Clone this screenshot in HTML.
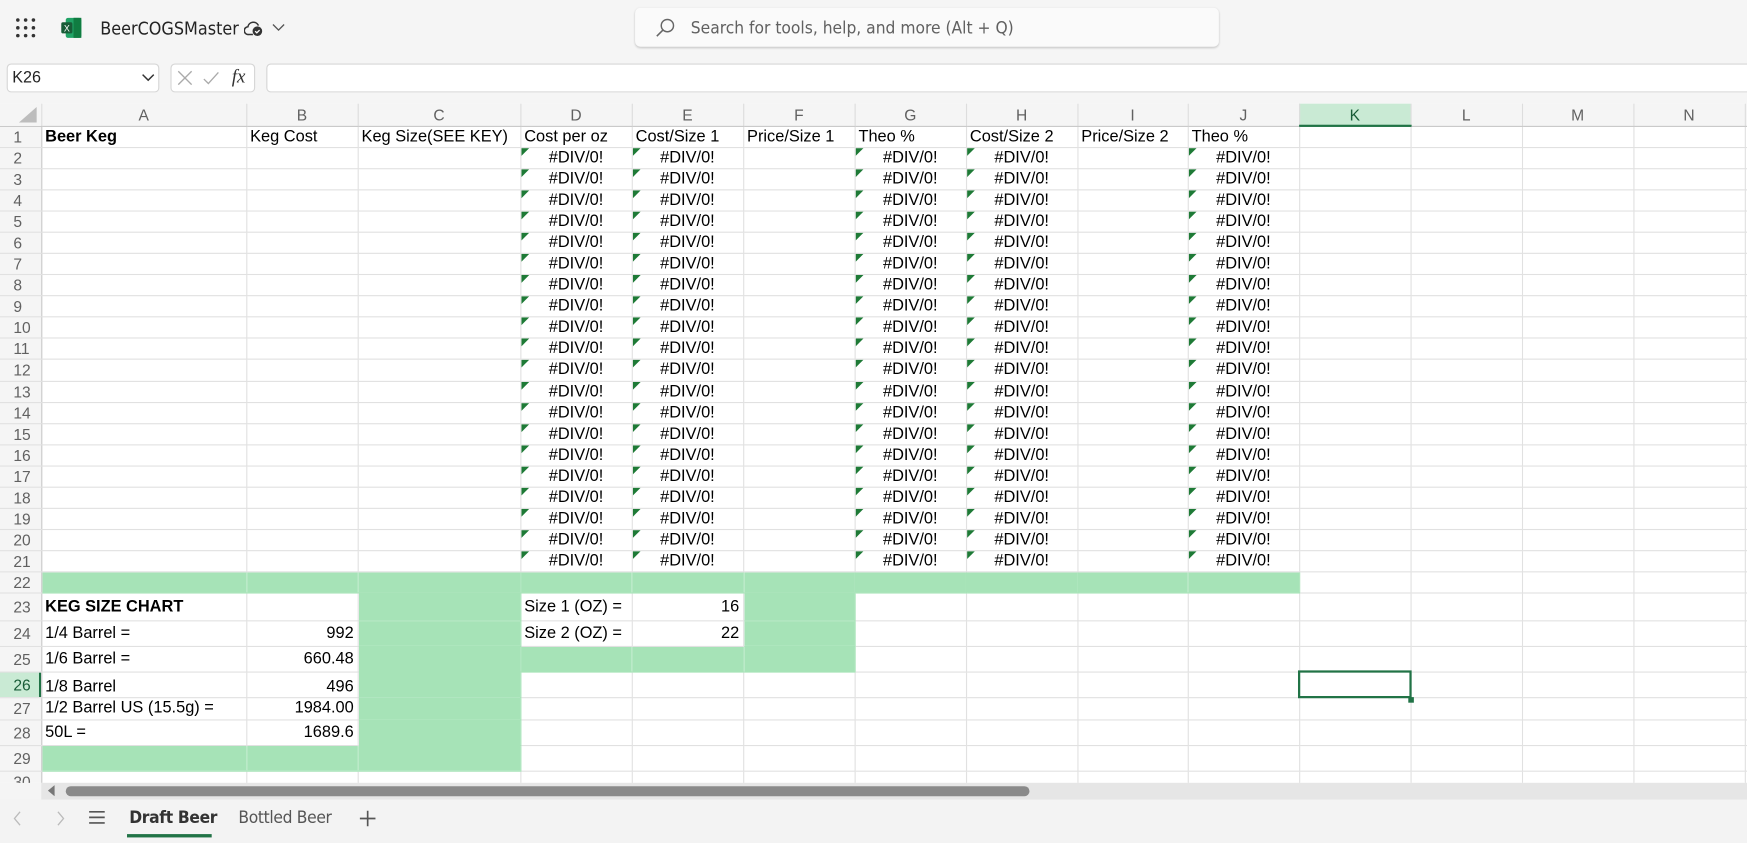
<!DOCTYPE html><html><head><meta charset="utf-8"><style>
html,body{margin:0;padding:0;width:1747px;height:843px;overflow:hidden;background:#f3f3f3;font-family:"Liberation Sans",Arial,sans-serif}
#w{position:absolute;left:0;top:0;width:1568px;height:757px;transform:scale(1.11416,1.11361);transform-origin:0 0;background:#f5f5f5;overflow:hidden}
.a{position:absolute}
#grid{position:absolute;left:0;top:93px;width:1568px;height:610px;overflow:hidden;background:#fff}
table{border-collapse:collapse;table-layout:fixed;width:1570px;font-size:14.7px;color:#000}
td{border:1px solid #e1e1e1;padding:0 3px;height:18px;white-space:nowrap;overflow:hidden;line-height:18px;position:relative}
tbody tr{height:19.05px}
th{font-weight:normal;color:#616161;font-size:14px;background:#f5f5f5;border-right:1px solid #c8c8c8;border-bottom:1px solid #e1e1e1;text-align:left;padding-left:12px}
thead th{text-align:center;padding:0;height:19px;border-right:1px solid #ddd;border-bottom:1px solid #c8c8c8}
td.e{text-align:center}
td.e:before{content:"";position:absolute;left:0;top:0;border-style:solid;border-width:7px 7px 0 0;border-color:#1e7a36 transparent transparent transparent;width:0;height:0}
td.g{background:#a6e3b7;border-color:#a6e3b7}
td.r{text-align:right}
b{font-weight:bold}
</style></head><body><div id="w">
<svg class="a" style="left:14px;top:16px" width="18" height="18"><g fill="#333"><circle cx="2" cy="2" r="1.6"/><circle cx="9" cy="2" r="1.6"/><circle cx="16" cy="2" r="1.6"/><circle cx="2" cy="9" r="1.6"/><circle cx="9" cy="9" r="1.6"/><circle cx="16" cy="9" r="1.6"/><circle cx="2" cy="16" r="1.6"/><circle cx="16" cy="16" r="1.6"/><circle cx="9" cy="16" r="1.6"/></g></svg>
<svg class="a" style="left:54px;top:15px" width="20" height="20"><rect x="5" y="1" width="14" height="18" rx="2" fill="#21a366"/><rect x="12" y="1" width="7" height="18" fill="#107c41"/><rect x="1" y="5" width="10" height="10" rx="1.5" fill="#185c37"/><text x="6" y="13.5" fill="#fff" font-size="8" text-anchor="middle" font-family="Liberation Sans">X</text></svg>
<div class="a" style="left:90px;top:16px;font-size:16px;color:#242424;font-family:'DejaVu Sans Condensed','Liberation Sans',sans-serif">BeerCOGSMaster</div>
<svg class="a" style="left:219px;top:17px" width="18" height="16"><path d="M13 6a5 5 0 0 0-9.5 1A3.5 3.5 0 0 0 4 14h4" fill="none" stroke="#333" stroke-width="1.4"/><circle cx="12" cy="11" r="4.3" fill="#333"/><path d="M10 11l1.5 1.5 2.5-2.5" stroke="#fff" stroke-width="1.2" fill="none"/></svg>
<svg class="a" style="left:244px;top:21px" width="12" height="8"><path d="M1 1l5 5 5-5" fill="none" stroke="#555" stroke-width="1.2"/></svg>
<div class="a" style="left:570px;top:7px;width:524px;height:35px;background:#fafafa;border-radius:5px;box-shadow:0 1px 2px rgba(0,0,0,.2)"></div>
<svg class="a" style="left:588px;top:16px" width="18" height="18"><circle cx="11" cy="7" r="5.5" fill="none" stroke="#666" stroke-width="1.3"/><path d="M7 11l-5.5 5.5" stroke="#666" stroke-width="1.4"/></svg>
<div class="a" style="left:620px;top:16px;font-size:15.5px;color:#616161;font-family:'DejaVu Sans Condensed','Liberation Sans',sans-serif">Search for tools, help, and more (Alt + Q)</div>
<div class="a" style="left:6px;top:57px;width:137px;height:26px;background:#fff;border:1px solid #d6d6d6;border-radius:4px;box-sizing:border-box"></div>
<div class="a" style="left:11px;top:62px;font-size:14.5px;color:#242424">K26</div>
<svg class="a" style="left:127px;top:66px" width="12" height="8"><path d="M1 1l5 5 5-5" fill="none" stroke="#333" stroke-width="1.3"/></svg>
<div class="a" style="left:153px;top:57px;width:76px;height:26px;background:#fff;border:1px solid #d6d6d6;border-radius:4px;box-sizing:border-box"></div>
<svg class="a" style="left:158px;top:62px" width="44" height="16"><path d="M2 2l12 12M14 2L2 14" stroke="#aaa" stroke-width="1.2"/><path d="M25 9l4 4 9-10" fill="none" stroke="#aaa" stroke-width="1.2"/></svg>
<div class="a" style="left:208px;top:59px;font-size:17px;font-style:italic;font-family:'Liberation Serif',serif;color:#333">fx</div>
<div class="a" style="left:239px;top:57px;width:1340px;height:26px;background:#fff;border:1px solid #d6d6d6;border-radius:4px;box-sizing:border-box"></div>
<div id="grid"><table>
<colgroup><col style="width:37px"><col style="width:184px"><col style="width:100px"><col style="width:146px"><col style="width:100px"><col style="width:100px"><col style="width:100px"><col style="width:100px"><col style="width:100px"><col style="width:99px"><col style="width:100px"><col style="width:100px"><col style="width:100px"><col style="width:100px"><col style="width:100px"><col style="width:4px"></colgroup>
<thead><tr><th style="position:relative"><svg style="position:absolute;right:4px;bottom:3px" width="16" height="14"><path d="M16 0V14H0z" fill="#bdbdbd"/></svg></th><th>A</th><th>B</th><th>C</th><th>D</th><th>E</th><th>F</th><th>G</th><th>H</th><th>I</th><th>J</th><th style="background:#c9ead4;color:#185c37;border-bottom:2px solid #217346">K</th><th>L</th><th>M</th><th>N</th><th></th></tr></thead>
<tbody>
<tr><th>1</th><td><b>Beer Keg</b></td><td>Keg Cost</td><td>Keg Size(SEE KEY)</td><td>Cost per oz</td><td>Cost/Size 1</td><td>Price/Size 1</td><td>Theo %</td><td>Cost/Size 2</td><td>Price/Size 2</td><td>Theo %</td><td></td><td></td><td></td><td></td><td></td></tr>
<tr><th>2</th><td></td><td></td><td></td><td class=e>#DIV/0!</td><td class=e>#DIV/0!</td><td></td><td class=e>#DIV/0!</td><td class=e>#DIV/0!</td><td></td><td class=e>#DIV/0!</td><td></td><td></td><td></td><td></td><td></td></tr>
<tr><th>3</th><td></td><td></td><td></td><td class=e>#DIV/0!</td><td class=e>#DIV/0!</td><td></td><td class=e>#DIV/0!</td><td class=e>#DIV/0!</td><td></td><td class=e>#DIV/0!</td><td></td><td></td><td></td><td></td><td></td></tr>
<tr><th>4</th><td></td><td></td><td></td><td class=e>#DIV/0!</td><td class=e>#DIV/0!</td><td></td><td class=e>#DIV/0!</td><td class=e>#DIV/0!</td><td></td><td class=e>#DIV/0!</td><td></td><td></td><td></td><td></td><td></td></tr>
<tr><th>5</th><td></td><td></td><td></td><td class=e>#DIV/0!</td><td class=e>#DIV/0!</td><td></td><td class=e>#DIV/0!</td><td class=e>#DIV/0!</td><td></td><td class=e>#DIV/0!</td><td></td><td></td><td></td><td></td><td></td></tr>
<tr><th>6</th><td></td><td></td><td></td><td class=e>#DIV/0!</td><td class=e>#DIV/0!</td><td></td><td class=e>#DIV/0!</td><td class=e>#DIV/0!</td><td></td><td class=e>#DIV/0!</td><td></td><td></td><td></td><td></td><td></td></tr>
<tr><th>7</th><td></td><td></td><td></td><td class=e>#DIV/0!</td><td class=e>#DIV/0!</td><td></td><td class=e>#DIV/0!</td><td class=e>#DIV/0!</td><td></td><td class=e>#DIV/0!</td><td></td><td></td><td></td><td></td><td></td></tr>
<tr><th>8</th><td></td><td></td><td></td><td class=e>#DIV/0!</td><td class=e>#DIV/0!</td><td></td><td class=e>#DIV/0!</td><td class=e>#DIV/0!</td><td></td><td class=e>#DIV/0!</td><td></td><td></td><td></td><td></td><td></td></tr>
<tr><th>9</th><td></td><td></td><td></td><td class=e>#DIV/0!</td><td class=e>#DIV/0!</td><td></td><td class=e>#DIV/0!</td><td class=e>#DIV/0!</td><td></td><td class=e>#DIV/0!</td><td></td><td></td><td></td><td></td><td></td></tr>
<tr><th>10</th><td></td><td></td><td></td><td class=e>#DIV/0!</td><td class=e>#DIV/0!</td><td></td><td class=e>#DIV/0!</td><td class=e>#DIV/0!</td><td></td><td class=e>#DIV/0!</td><td></td><td></td><td></td><td></td><td></td></tr>
<tr><th>11</th><td></td><td></td><td></td><td class=e>#DIV/0!</td><td class=e>#DIV/0!</td><td></td><td class=e>#DIV/0!</td><td class=e>#DIV/0!</td><td></td><td class=e>#DIV/0!</td><td></td><td></td><td></td><td></td><td></td></tr>
<tr><th>12</th><td></td><td></td><td></td><td class=e>#DIV/0!</td><td class=e>#DIV/0!</td><td></td><td class=e>#DIV/0!</td><td class=e>#DIV/0!</td><td></td><td class=e>#DIV/0!</td><td></td><td></td><td></td><td></td><td></td></tr>
<tr><th>13</th><td></td><td></td><td></td><td class=e>#DIV/0!</td><td class=e>#DIV/0!</td><td></td><td class=e>#DIV/0!</td><td class=e>#DIV/0!</td><td></td><td class=e>#DIV/0!</td><td></td><td></td><td></td><td></td><td></td></tr>
<tr><th>14</th><td></td><td></td><td></td><td class=e>#DIV/0!</td><td class=e>#DIV/0!</td><td></td><td class=e>#DIV/0!</td><td class=e>#DIV/0!</td><td></td><td class=e>#DIV/0!</td><td></td><td></td><td></td><td></td><td></td></tr>
<tr><th>15</th><td></td><td></td><td></td><td class=e>#DIV/0!</td><td class=e>#DIV/0!</td><td></td><td class=e>#DIV/0!</td><td class=e>#DIV/0!</td><td></td><td class=e>#DIV/0!</td><td></td><td></td><td></td><td></td><td></td></tr>
<tr><th>16</th><td></td><td></td><td></td><td class=e>#DIV/0!</td><td class=e>#DIV/0!</td><td></td><td class=e>#DIV/0!</td><td class=e>#DIV/0!</td><td></td><td class=e>#DIV/0!</td><td></td><td></td><td></td><td></td><td></td></tr>
<tr><th>17</th><td></td><td></td><td></td><td class=e>#DIV/0!</td><td class=e>#DIV/0!</td><td></td><td class=e>#DIV/0!</td><td class=e>#DIV/0!</td><td></td><td class=e>#DIV/0!</td><td></td><td></td><td></td><td></td><td></td></tr>
<tr><th>18</th><td></td><td></td><td></td><td class=e>#DIV/0!</td><td class=e>#DIV/0!</td><td></td><td class=e>#DIV/0!</td><td class=e>#DIV/0!</td><td></td><td class=e>#DIV/0!</td><td></td><td></td><td></td><td></td><td></td></tr>
<tr><th>19</th><td></td><td></td><td></td><td class=e>#DIV/0!</td><td class=e>#DIV/0!</td><td></td><td class=e>#DIV/0!</td><td class=e>#DIV/0!</td><td></td><td class=e>#DIV/0!</td><td></td><td></td><td></td><td></td><td></td></tr>
<tr><th>20</th><td></td><td></td><td></td><td class=e>#DIV/0!</td><td class=e>#DIV/0!</td><td></td><td class=e>#DIV/0!</td><td class=e>#DIV/0!</td><td></td><td class=e>#DIV/0!</td><td></td><td></td><td></td><td></td><td></td></tr>
<tr><th>21</th><td></td><td></td><td></td><td class=e>#DIV/0!</td><td class=e>#DIV/0!</td><td></td><td class=e>#DIV/0!</td><td class=e>#DIV/0!</td><td></td><td class=e>#DIV/0!</td><td></td><td></td><td></td><td></td><td></td></tr>
<tr><th>22</th><td class=g></td><td class=g></td><td class=g></td><td class=g></td><td class=g></td><td class=g></td><td class=g></td><td class=g></td><td class=g></td><td class=g></td><td></td><td></td><td></td><td></td><td></td></tr>
<tr style="height:25px"><th>23</th><td><b>KEG SIZE CHART</b></td><td></td><td class=g></td><td>Size 1 (OZ) =</td><td class=r>16</td><td class=g></td><td></td><td></td><td></td><td></td><td></td><td></td><td></td><td></td><td></td></tr>
<tr style="height:23px"><th>24</th><td>1/4 Barrel =</td><td class=r>992</td><td class=g></td><td>Size 2 (OZ) =</td><td class=r>22</td><td class=g></td><td></td><td></td><td></td><td></td><td></td><td></td><td></td><td></td><td></td></tr>
<tr style="height:23px"><th>25</th><td>1/6 Barrel =</td><td class=r>660.48</td><td class=g></td><td class=g></td><td class=g></td><td class=g></td><td></td><td></td><td></td><td></td><td></td><td></td><td></td><td></td><td></td></tr>
<tr style="height:23px"><th style="background:#c9ead4;color:#185c37;box-shadow:inset -2px 0 0 #217346">26</th><td style="vertical-align:bottom">1/8 Barrel</td><td class=r style="vertical-align:bottom">496</td><td class=g></td><td></td><td></td><td></td><td></td><td></td><td></td><td></td><td style="outline:2px solid #217346;outline-offset:-1px"></td><td></td><td></td><td></td><td></td></tr>
<tr style="height:20px"><th>27</th><td>1/2 Barrel US (15.5g) =</td><td class=r>1984.00</td><td class=g></td><td></td><td></td><td></td><td></td><td></td><td></td><td></td><td></td><td></td><td></td><td></td><td></td></tr>
<tr style="height:23px"><th>28</th><td>50L =</td><td class=r>1689.6</td><td class=g></td><td></td><td></td><td></td><td></td><td></td><td></td><td></td><td></td><td></td><td></td><td></td><td></td></tr>
<tr style="height:23px"><th>29</th><td class=g></td><td class=g></td><td class=g></td><td></td><td></td><td></td><td></td><td></td><td></td><td></td><td></td><td></td><td></td><td></td><td></td></tr>
<tr style="height:20px"><th>30</th><td></td><td></td><td></td><td></td><td></td><td></td><td></td><td></td><td></td><td></td><td></td><td></td><td></td><td></td><td></td></tr>
</tbody></table></div>
<div class="a" style="left:1264px;top:626px;width:5px;height:5px;background:#217346"></div>
<div class="a" style="left:37px;top:703px;width:1531px;height:15px;background:#e6e6e6"></div>
<svg class="a" style="left:42px;top:705px" width="8" height="10"><path d="M7 0V10L1 5z" fill="#777"/></svg>
<div class="a" style="left:59px;top:706px;width:865px;height:9px;background:#8a8a8a;border-radius:5px"></div>
<div class="a" style="left:0;top:718px;width:1568px;height:39px;background:#f3f3f3;border-bottom:1px solid #ddd"></div>
<svg class="a" style="left:10px;top:727px" width="50" height="16"><path d="M8 2l-5 6 5 6" fill="none" stroke="#bbb" stroke-width="1.2"/><path d="M45 2l5 6-5 6" fill="none" stroke="#bbb" stroke-width="1.2" transform="translate(-3 0)"/></svg>
<svg class="a" style="left:79px;top:727px" width="16" height="14"><path d="M1 2h14M1 7h14M1 12h14" stroke="#555" stroke-width="1.5"/></svg>
<div class="a" style="left:116px;top:725px;font-size:15.5px;font-weight:bold;color:#333;font-family:'DejaVu Sans Condensed','Liberation Sans',sans-serif;letter-spacing:-.3px">Draft Beer</div>
<div class="a" style="left:114px;top:749px;width:76px;height:3px;background:#217346"></div>
<div class="a" style="left:214px;top:725px;font-size:15.5px;color:#555;font-family:'DejaVu Sans Condensed','Liberation Sans',sans-serif;letter-spacing:-.3px">Bottled Beer</div>
<svg class="a" style="left:322px;top:727px" width="16" height="16"><path d="M8 1v14M1 8h14" stroke="#555" stroke-width="1.5"/></svg>
</div></body></html>
